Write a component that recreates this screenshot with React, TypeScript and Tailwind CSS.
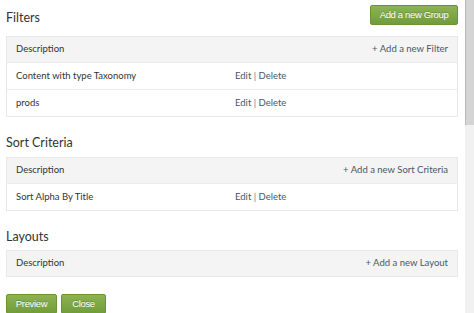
import type { ReactNode } from 'react'

type Row = {
  id: number
  title: string
}

const font = { fontFamily: 'Lato, "Open Sans", sans-serif' }

function GreenButton({ label, className = '' }: { label: string; className?: string }) {
  return (
    <button
      className={`h-[20px] rounded-[2px] border border-[#6b9235] bg-gradient-to-b from-[#8cb352] to-[#729c3a] text-[9.5px] leading-none tracking-[-0.35px] text-white [text-shadow:0_-1px_0_rgba(0,0,0,0.2)] ${className}`}
      style={{ fontFamily: '"Liberation Sans", Arial, sans-serif' }}
    >
      {label}
    </button>
  )
}

function Heading({ children }: { children: ReactNode }) {
  return <h2 className="text-[12.5px] leading-[20px] text-[#333]">{children}</h2>
}

function Table({ addLabel, rows }: { addLabel: string; rows: Row[] }) {
  return (
    <div className="border border-[#e8e8e8] text-[9.5px]">
      <div className="flex h-[25px] items-center justify-between bg-[#f4f4f4] px-[9px] text-[#333]">
        <span>Description</span>
        <span className="text-[#4a5866]">+ Add a new {addLabel}</span>
      </div>
      {rows.map((row) => (
        <div
          key={row.id}
          className="grid h-[27px] grid-cols-[219px_1fr] items-center border-t border-[#ececec] bg-white"
        >
          <span className="pl-[9px] text-[#333]">{row.title}</span>
          <span className="pl-[9px] text-[#4a5866]">
            Edit <span className="text-[#6b7c8c]">|</span> Delete
          </span>
        </div>
      ))}
    </div>
  )
}

export default function App() {
  return (
    <div className="flex h-[313px] w-[474px] overflow-hidden bg-white" style={font}>
      <div className="flex-1 pl-[6px] pr-[7px]">
        <div className="mt-[5px] flex h-[19px] items-center justify-between">
          <div className="pt-[6px]">
            <Heading>Filters</Heading>
          </div>
          <GreenButton label="Add a new Group" className="h-[19px] w-[88px]" />
        </div>

        <div className="mt-[12px]">
          <Table
            addLabel="Filter"
            rows={[
              { id: 1, title: 'Content with type Taxonomy' },
              { id: 2, title: 'prods' },
            ]}
          />
        </div>

        <div className="mb-[4px] mt-[16px]">
          <Heading>Sort Criteria</Heading>
        </div>
        <Table addLabel="Sort Criteria" rows={[{ id: 1, title: 'Sort Alpha By Title' }]} />

        <div className="mb-[3px] mt-[16px]">
          <Heading>Layouts</Heading>
        </div>
        <Table addLabel="Layout" rows={[]} />

        <div className="mt-[17px] flex gap-[4px]">
          <GreenButton label="Preview" className="w-[51px]" />
          <GreenButton label="Close" className="w-[45px]" />
        </div>
      </div>

      <div className="w-[9px] bg-[#f1f1f1]">
        <div className="h-[125px] border-l border-[#b9b9b9] bg-[#d4d4d4]" />
      </div>
    </div>
  )
}
